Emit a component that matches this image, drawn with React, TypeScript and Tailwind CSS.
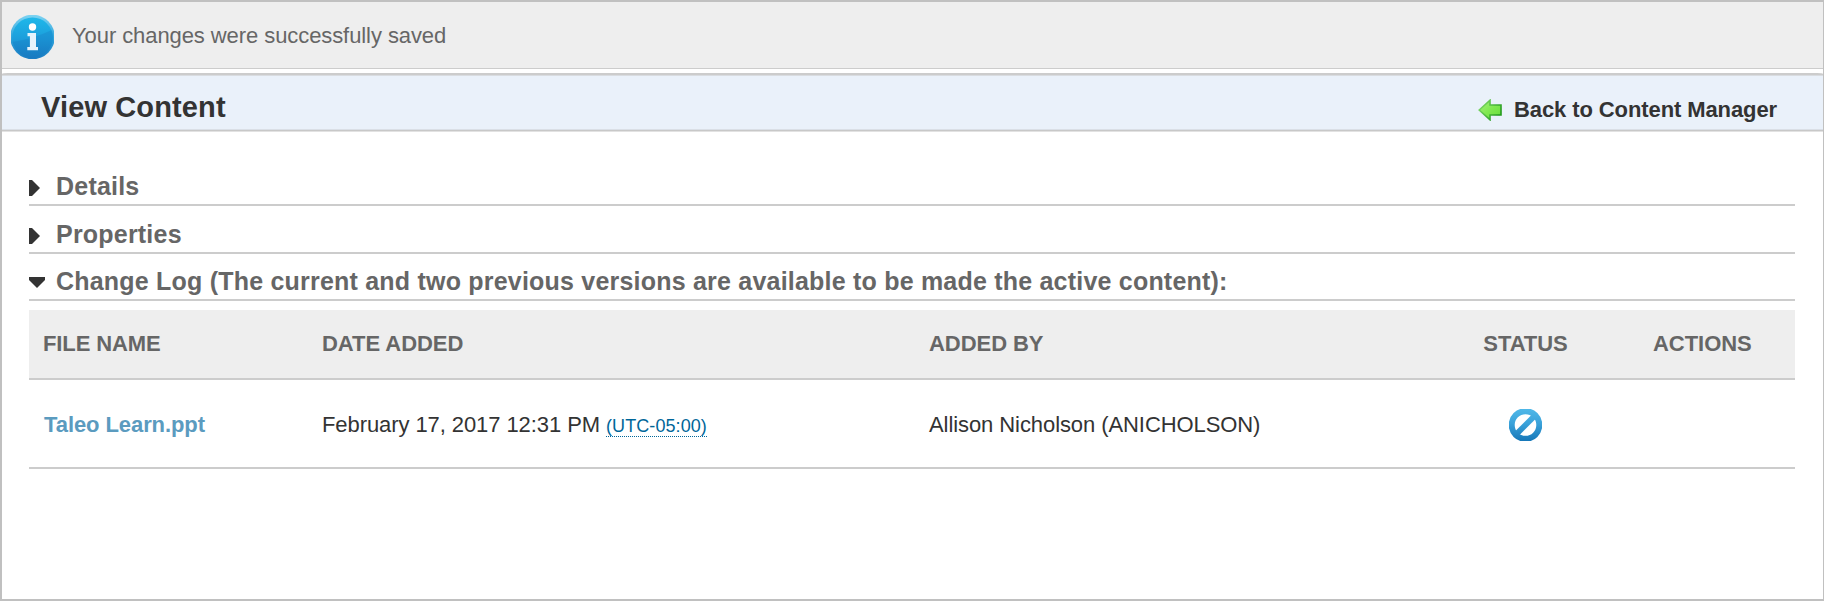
import type { ReactNode } from 'react'

type Column = {
    label: string
    className: string
}

const columns: Column[] = [
    { label: 'FILE NAME', className: 'w-[278px] pl-[14px] tracking-[-0.12px]' },
    { label: 'DATE ADDED', className: 'w-[607px] pl-[15px]' },
    { label: 'ADDED BY', className: 'w-[536px] pl-[15px]' },
    { label: 'STATUS', className: 'w-[151px] text-center' },
    { label: 'ACTIONS', className: 'w-[194px] pl-[52px]' },
]

/* =========================
   ICONS
========================= */
function InfoIcon() {
    return (
        <svg className="mt-[13px] h-11 w-[43px] shrink-0" viewBox="0 0 43 44" preserveAspectRatio="none">
            <defs>
                <linearGradient id="info" x1="0" y1="0" x2="0" y2="1">
                    <stop offset="0" stopColor="#1fb8ea" />
                    <stop offset="0.5" stopColor="#1c9fdc" />
                    <stop offset="1" stopColor="#1b7cc2" />
                </linearGradient>
                <linearGradient id="infoRim" x1="0" y1="0" x2="0" y2="1">
                    <stop offset="0" stopColor="#7fd4f2" />
                    <stop offset="0.5" stopColor="#2fa4dc" />
                    <stop offset="1" stopColor="#1b7cc2" />
                </linearGradient>
                <clipPath id="infoClip">
                    <circle cx="21.5" cy="22" r="20.5" />
                </clipPath>
            </defs>
            <circle cx="21.5" cy="22" r="22.3" fill="url(#infoRim)" />
            <circle cx="21.5" cy="22.8" r="20.3" fill="url(#info)" />
            <path d="M0 27 Q20 25 43 14 V44 H0Z" fill="#1878c0" opacity="0.3" clipPath="url(#infoClip)" />
            <circle cx="21.5" cy="12" r="3.7" fill="#fff" />
            <path d="M16.5 18H25V32H27V35.3H16.3V32H18.9V21.2H16.5Z" fill="#e4f3fc" />
        </svg>
    )
}

function BackArrow() {
    return (
        <svg className="h-[22px] w-6 shrink-0" viewBox="0 0 24 22">
            <defs>
                <linearGradient id="arrow" x1="0" y1="0" x2="1" y2="1">
                    <stop offset="0" stopColor="#a4f07c" />
                    <stop offset="0.5" stopColor="#80e850" />
                    <stop offset="1" stopColor="#66dc38" />
                </linearGradient>
                <linearGradient id="arrowEdge" x1="0" y1="0" x2="1" y2="0.6">
                    <stop offset="0" stopColor="#8ae070" />
                    <stop offset="1" stopColor="#229a1c" />
                </linearGradient>
            </defs>
            <path d="M1.2 11L12 1.2V6H23V16H12V20.8Z" fill="url(#arrow)" stroke="url(#arrowEdge)" strokeWidth="1.6" />
        </svg>
    )
}

function BlockedIcon() {
    return (
        <svg className="mx-auto mt-[2px] h-8 w-[33px]" viewBox="0 0 33 32">
            <defs>
                <linearGradient id="blocked" gradientUnits="userSpaceOnUse" x1="0" y1="0" x2="0" y2="32">
                    <stop offset="0" stopColor="#4fb8e8" />
                    <stop offset="0.45" stopColor="#3aa2da" />
                    <stop offset="1" stopColor="#1677b8" />
                </linearGradient>
            </defs>
            <circle cx="16.5" cy="16" r="13.8" fill="none" stroke="url(#blocked)" strokeWidth="6" />
            <path d="M7.5 25L25.5 7" stroke="url(#blocked)" strokeWidth="5.8" />
        </svg>
    )
}

function Caret({ open }: { open?: boolean }) {
    return (
        <svg className="mt-[9px] h-4 w-4 shrink-0" viewBox="0 0 16 16">
            <path d={open ? 'M0 2H16V5L8 13L0 5Z' : 'M0 0H3L11 8L3 16H0Z'} fill="#333" />
        </svg>
    )
}

/* =========================
   SECTION HEADING
========================= */
function Section({ open, className, children }: { open?: boolean; className: string; children: ReactNode }) {
    return (
        <div className={`flex items-start border-b-2 border-[#ccc] text-[#666] ${className}`}>
            <Caret open={open} />
            <h2 className="mt-px ml-[11px] text-[25px] leading-7 font-bold tracking-[0.21px] whitespace-nowrap">
                {children}
            </h2>
        </div>
    )
}

export default function App() {
    return (
        <div className="flex h-[601px] w-[1824px] flex-col border-2 border-r border-[#c0c0c0] bg-white font-['Liberation_Sans',Arial,sans-serif]">

            {/* NOTICE */}
            <div className="flex h-[67px] items-start border-b border-[#ccc] bg-[#eee] pl-[9px] text-[22px] text-[#666]">
                <InfoIcon />
                <span className="mt-px ml-[18px] leading-[65px] tracking-[-0.08px]">Your changes were successfully saved</span>
            </div>

            {/* TITLE BAR */}
            <div className="mt-1 flex h-[58px] items-start justify-between border-t-2 border-b border-t-[#ccc] border-b-[#c8c8c8] bg-[#eaf1fa] pr-[46px] pl-[39px] text-[#333] shadow-[inset_0_1px_0_#d9dce0,inset_0_-1px_0_#dadfe6,0_1px_0_#e2e2e2] [border-radius:6px_6px_0_0/1px_1px_0_0]">
                <h1 className="mt-4 text-[29px] leading-8 font-bold tracking-[0.13px]">View Content</h1>
                <a className="mt-[23px] flex items-center gap-3 text-[22px] leading-6 font-bold tracking-[-0.1px]">
                    <BackArrow />
                    Back to Content Manager
                </a>
            </div>

            {/* CONTENT */}
            <div className="pr-[28px] pl-[27px]">
                <Section className="mt-[40px] h-[35px]">Details</Section>
                <Section className="mt-[13px] h-[35px]">Properties</Section>
                <Section open className="mt-[12px] h-[35px]">
                    Change Log (The current and two previous versions are available to be made the active content):
                </Section>

                <table className="mt-[9px] w-full table-fixed border-collapse text-left text-[22px]">
                    <thead>
                        <tr className="h-[69px] border-b-2 border-[#ccc] bg-[#eee] tracking-[-0.05px] text-[#666]">
                            {columns.map((column) => (
                                <th key={column.label} className={`pb-0.5 ${column.className}`}>{column.label}</th>
                            ))}
                        </tr>
                    </thead>
                    <tbody>
                        <tr className="h-[89px] border-b-2 border-[#ccc] tracking-[-0.08px] text-[#333]">
                            <td className="pt-px pl-[15px] font-bold text-[#5b9bbf]">Taleo Learn.ppt</td>
                            <td className="pt-px pl-[15px]">
                                February 17, 2017 12:31 PM{' '}
                                <span className="border-b border-dotted border-[#069] text-[18px] tracking-[0.08px] text-[#069]">(UTC-05:00)</span>
                            </td>
                            <td className="pt-px pl-[15px]">Allison Nicholson (ANICHOLSON)</td>
                            <td><BlockedIcon /></td>
                            <td></td>
                        </tr>
                    </tbody>
                </table>
            </div>
        </div>
    )
}
